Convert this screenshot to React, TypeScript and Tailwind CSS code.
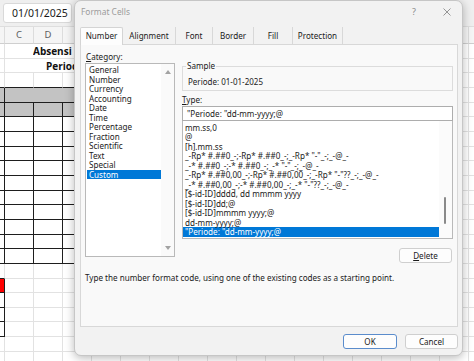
import React from 'react';

const GR = 'border-r-[#e2e2e2]';
const GB = 'border-b-[#e2e2e2]';
const KR = 'border-r-[#1e1e1e]';
const KB = 'border-b-[#1e1e1e]';
const BAND = 'bg-[#c3c3c3]';
const N = 18;
const TABLE_LAST = 9;
const LETTERS = 'BCDEFGHIJKLMNOPQRS';

type Kind = 'plain' | 'preband' | 'band2' | 'table' | 'prebox' | 'red' | 'box';

function cellCls(kind: Kind, i: number) {
  const t = i <= TABLE_LAST;
  let bg = '';
  let r = GR;
  let b = GB;
  if (kind === 'preband' && t) b = KB;
  if (kind === 'band2' && t) {
    bg = BAND;
    r = KR;
    b = KB;
  }
  if (kind === 'table' && t) {
    r = KR;
    b = KB;
  }
  if (kind === 'prebox' && i === 0) b = KB;
  if ((kind === 'red' || kind === 'box') && i === 0) {
    r = KR;
    b = KB;
    if (kind === 'red') bg = 'bg-[#ff0000]';
  }
  return `${i === 0 ? 'w-[5px]' : 'w-[29px]'} shrink-0 h-full border-r border-b ${r} ${b} ${bg}`;
}

function GridRow({ kind }: { kind: Kind }) {
  return (
    <div className="flex h-[14.67px]">
      {Array.from({ length: N }, (_, i) => (
        <div key={i} className={cellCls(kind, i)} />
      ))}
    </div>
  );
}

function RestCells() {
  return (
    <>
      {Array.from({ length: N - 10 }, (_, i) => (
        <div key={i} className={cellCls('plain', i + 10)} />
      ))}
    </>
  );
}

function TitleRow({ text, pl, tw }: { text: string; pl: string; tw: string }) {
  return (
    <div className="flex h-[14.67px]">
      <div className={`w-[5px] shrink-0 h-full border-r border-b ${GR} ${GB}`} />
      <div className={`w-[261px] shrink-0 h-full border-r border-b ${GR} ${GB} ${pl}`}>
        <div
          className={`${tw} overflow-hidden font-bold text-[10px] leading-[14px] whitespace-nowrap text-[#111] [font-family:'Open_Sans',sans-serif]`}
        >
          {text}
        </div>
      </div>
      <RestCells />
    </div>
  );
}

function BandRow() {
  return (
    <div className="flex h-[14.67px]">
      <div className={`w-[5px] shrink-0 h-full border-r border-b ${KR} ${KB} ${BAND}`} />
      <div className={`w-[261px] shrink-0 h-full border-r border-b ${KR} ${KB} ${BAND}`} />
      <RestCells />
    </div>
  );
}

function Sheet() {
  return (
    <div className="flex flex-col">
      <div className="h-[27px] bg-[#efefef] border-b border-[#dedede] pt-[3px] pl-[3px]">
        <div className="w-[69px] h-[20px] bg-white border border-[#d9d9d9] rounded-[3px] pl-[8px] text-[10.5px] leading-[18px] text-[#1a1a1a]">
          01/01/2025
        </div>
      </div>
      <div className="flex h-[17px] bg-[#f5f5f5]">
        {Array.from({ length: N }, (_, i) => (
          <div
            key={i}
            className={`${i === 0 ? 'w-[5px]' : 'w-[29px]'} shrink-0 h-full overflow-hidden border-r border-b border-r-[#dcdcdc] border-b-[#cfcfcf] text-center text-[9.5px] leading-[16px] text-[#606060]`}
          >
            {i === 1 || i === 2 ? LETTERS[i] : ''}
          </div>
        ))}
      </div>
      <TitleRow text="Absensi Siswa" pl="pl-[28px]" tw="w-[41px]" />
      <TitleRow text="Periode: 01-01-2025" pl="pl-[41px]" tw="w-[28px]" />
      <GridRow kind="preband" />
      <BandRow />
      <GridRow kind="band2" />
      {Array.from({ length: 10 }, (_, i) => (
        <GridRow key={i} kind="table" />
      ))}
      <GridRow kind="prebox" />
      <GridRow kind="red" />
      <GridRow kind="box" />
      <GridRow kind="box" />
      <GridRow kind="box" />
      <GridRow kind="plain" />
      <GridRow kind="plain" />
    </div>
  );
}

const CATEGORIES = [
  'General',
  'Number',
  'Currency',
  'Accounting',
  'Date',
  'Time',
  'Percentage',
  'Fraction',
  'Scientific',
  'Text',
  'Special',
  'Custom',
];

const FORMATS = [
  'mm.ss,0',
  '@',
  '[h].mm.ss',
  '_-Rp* #.##0_-;-Rp* #.##0_-;_-Rp* "-"_-;_-@_-',
  '_-* #.##0_-;-* #.##0_-;_-* "-"_-;_-@_-',
  '_-Rp* #.##0,00_-;-Rp* #.##0,00_-;_-Rp* "-"??_-;_-@_-',
  '_-* #.##0,00_-;-* #.##0,00_-;_-* "-"??_-;_-@_-',
  '[$-id-ID]dddd, dd mmmm yyyy',
  '[$-id-ID]dd;@',
  '[$-id-ID]mmmm yyyy;@',
  'dd-mm-yyyy;@',
  '"Periode: "dd-mm-yyyy;@',
];

function Item({ text, selected }: { text: string; selected?: boolean }) {
  return (
    <div
      className={`h-[9.5px] leading-[9.5px] whitespace-nowrap pl-[2px] ${
        selected ? 'bg-[#0078d7] text-white' : 'text-[#1b1b1b]'
      }`}
    >
      {text}
    </div>
  );
}

function Tab({ label, w, selected }: { label: string; w: string; selected?: boolean }) {
  return selected ? (
    <div
      className={`${w} relative z-10 -mb-px bg-[#fdfdfd] border border-b-0 border-[#d4d4d4] rounded-t-[2px] text-center leading-[16px]`}
    >
      {label}
    </div>
  ) : (
    <div className={`${w} border-r border-[#d8d8d8] text-center leading-[17px]`}>{label}</div>
  );
}

function Dialog() {
  return (
    <div className="absolute left-[74px] top-0 w-[389px] h-[356px] rounded-[7px] border border-[#c6c6c6] bg-[#f2f2f2] shadow-[0_2px_10px_rgba(0,0,0,0.28)] flex flex-col text-[8.1px] text-[#1b1b1b]">
      <div className="h-[26px] flex items-start pt-[6px] pl-[6px] pr-[11px]">
        <span className="text-[8.4px] leading-[10px] text-[#9b9b9b]">Format Cells</span>
        <span className="ml-auto w-[10px] text-center text-[9px] leading-[10px] text-[#8a8a8a]">?</span>
        <svg className="ml-[24px] mt-[1px]" width="8" height="8" viewBox="0 0 8 8">
          <path d="M0.5 0.5 L7.5 7.5 M7.5 0.5 L0.5 7.5" stroke="#8a8a8a" strokeWidth="0.9" />
        </svg>
      </div>
      <div className="h-[17px] flex pl-[5px] text-[8.1px]">
        <Tab label="Number" w="w-[43px]" selected />
        <Tab label="Alignment" w="w-[53px]" />
        <Tab label="Font" w="w-[37px]" />
        <Tab label="Border" w="w-[41px]" />
        <Tab label="Fill" w="w-[39px]" />
        <Tab label="Protection" w="w-[50px]" />
      </div>
      <div className="ml-[5px] w-[378px] h-[283px] border border-[#d8d8d8] bg-[#f9f9f9] flex flex-col">
        <div className="flex">
          <div className="ml-[4px] w-[90px] pt-[7px] flex flex-col">
            <div className="h-[11px] leading-[10px] pl-[1px]">
              <span className="underline">C</span>ategory:
            </div>
            <div className="h-[194px] bg-white border border-[#b9b9b9] flex">
              <div className="flex-1 pt-[1px] pl-[1px]">
                {CATEGORIES.map((c) => (
                  <Item key={c} text={c} selected={c === 'Custom'} />
                ))}
              </div>
              <div className="w-[13px] bg-[#fafafa] flex flex-col items-center justify-between py-[6px]">
                <svg width="6" height="4" viewBox="0 0 6 4">
                  <path d="M0 4 L3 0 L6 4 Z" fill="#a3a3a3" />
                </svg>
                <svg width="6" height="4" viewBox="0 0 6 4">
                  <path d="M0 0 L6 0 L3 4 Z" fill="#a3a3a3" />
                </svg>
              </div>
            </div>
          </div>
          <div className="ml-[7px] w-[271px] pt-[21px] flex flex-col">
            <div className="relative h-[25px] border border-[#dcdcdc] pt-[10px] pl-[5px]">
              <span className="absolute left-[3px] top-[-6px] px-[1px] bg-[#f9f9f9] leading-[10px]">Sample</span>
              <div className="leading-[10px] text-[8px]">Periode: 01-01-2025</div>
            </div>
            <div className="mt-[4px] h-[10px] leading-[10px]">
              <span className="underline">T</span>ype:
            </div>
            <div className="mt-[1px] h-[15px] bg-white border border-[#adadad] pl-[4px] leading-[13px]">
              "Periode: "dd-mm-yyyy;@
            </div>
            <div className="h-[118px] bg-white border border-[#b9b9b9] border-t-0 flex">
              <div className="flex-1 pt-[1.5px] overflow-hidden">
                {FORMATS.map((f, i) => (
                  <Item key={i} text={f} selected={i === FORMATS.length - 1} />
                ))}
              </div>
              <div className="w-[13px] bg-[#fbfbfb] relative">
                <div className="absolute left-[5px] top-[76px] w-[2px] h-[27px] rounded-full bg-[#8a8a8a]" />
              </div>
            </div>
            <div className="mt-[9px] self-end mr-[1px] w-[53px] h-[15px] rounded-[3px] border border-[#cfcfcf] bg-[#fdfdfd] text-center leading-[13px]">
              <span className="underline">D</span>elete
            </div>
          </div>
        </div>
        <div className="mt-[10px] pl-[4px] leading-[10px] whitespace-nowrap">
          Type the number format code, using one of the existing codes as a starting point.
        </div>
      </div>
      <div className="mt-[7px] flex justify-end gap-[8px] pr-[4px]">
        <div className="w-[54px] h-[15px] rounded-[3px] border border-[#5a8ccc] bg-[#fdfdfd] text-center leading-[13px]">
          OK
        </div>
        <div className="w-[53px] h-[15px] rounded-[3px] border border-[#cfcfcf] bg-[#fdfdfd] text-center leading-[13px]">
          Cancel
        </div>
      </div>
    </div>
  );
}

export default function App() {
  return (
    <div className="relative w-[474px] h-[361px] overflow-hidden bg-white [font-family:'Noto_Sans',sans-serif]">
      <Sheet />
      <Dialog />
    </div>
  );
}
